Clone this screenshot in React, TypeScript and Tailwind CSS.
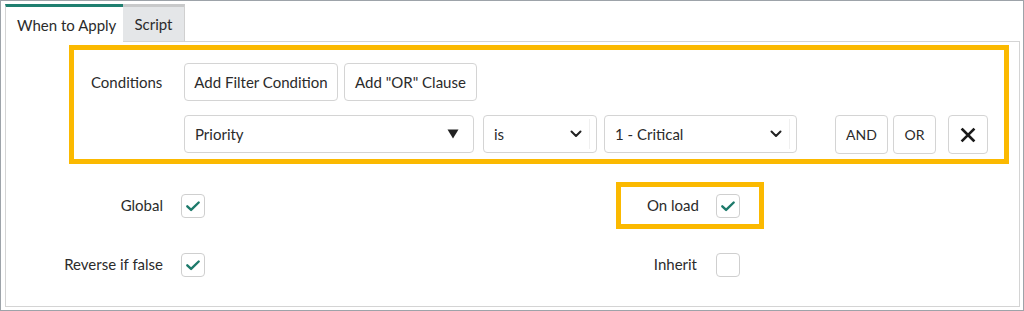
import React from "react";

const font = { fontFamily: "Lato, 'Liberation Sans', sans-serif" };

function Check({ checked }: { checked: boolean }) {
  return (
    <div className="w-[24px] h-[24px] rounded-[4px] border border-[#cfcfcf] bg-white flex items-center justify-center">
      {checked && (
        <svg width="16" height="16" viewBox="0 0 16 16" fill="none">
          <path d="M2.3 8.3 L6.1 11.9 L13.7 4.5" stroke="#1d7a6b" strokeWidth="2.4" strokeLinecap="round" strokeLinejoin="round" />
        </svg>
      )}
    </div>
  );
}

function Chevron() {
  return (
    <svg width="12" height="8" viewBox="0 0 12 8" fill="none">
      <path d="M1.5 1.5 L6 6 L10.5 1.5" stroke="#222" strokeWidth="2" strokeLinecap="round" strokeLinejoin="round" />
    </svg>
  );
}

export default function App() {
  return (
    <div style={font} className="w-[1024px] h-[311px] bg-white border border-[#9da3a9] text-[#2b2b2b] text-[15px] pl-[4px] pr-[3px] pt-[3px] flex flex-col">
      {/* tabs */}
      <div className="flex h-[38px] relative z-10">
        <div className="w-[118px] h-[38px] bg-white border-t-[3px] border-t-[#1f7f70] border-l border-l-[#d4d4d4] flex items-center pl-[11px] pt-[1px]">
          When to Apply
        </div>
        <div className="w-[62px] h-[38px] bg-[#e4e6e8] border-t-[3px] border-t-[#c8c9ca] border-r border-r-[#d0d0d0] border-b border-b-[#d4d4d4] flex items-center justify-center pt-[1px]">
          Script
        </div>
      </div>
      {/* panel */}
      <div className="-mt-px w-[1015px] h-[266px] border border-[#d4d4d4] flex flex-col pt-[3px]">
        {/* conditions box */}
        <div className="ml-[63px] w-[940px] h-[119px] border-[5px] border-[#fbb900] flex pt-[13px]">
          <div className="w-[110px] pl-[17px] pt-[8px] shrink-0">Conditions</div>
          <div className="flex flex-col gap-[14px]">
            <div className="flex gap-[6px]">
              <button className="h-[38px] w-[154px] rounded-[4px] border border-[#d4d4d4] bg-white">Add Filter Condition</button>
              <button className="h-[38px] w-[133px] rounded-[4px] border border-[#d4d4d4] bg-white">Add "OR" Clause</button>
            </div>
            <div className="flex">
              <div className="h-[38px] w-[290px] rounded-[4px] border border-[#d4d4d4] flex items-center justify-between pl-[10px] pr-[14px]">
                <span>Priority</span>
                <svg width="12" height="10" viewBox="0 0 12 10"><path d="M0.5 0.5 H11.5 L6 9.5 Z" fill="#222" /></svg>
              </div>
              <div className="ml-[9px] h-[38px] w-[114px] rounded-[4px] border border-[#d4d4d4] flex items-center pl-[10px] pr-[6px]">
                <span className="flex-1">is</span>
                <Chevron />
                <div className="ml-[7px] w-px h-[30px] bg-[#f0f0f0]" />
              </div>
              <div className="ml-[7px] h-[38px] w-[193px] rounded-[4px] border border-[#d4d4d4] flex items-center pl-[10px] pr-[6px]">
                <span className="flex-1">1 - Critical</span>
                <Chevron />
                <div className="ml-[7px] w-px h-[30px] bg-[#f0f0f0]" />
              </div>
              <button className="ml-[38px] h-[39px] w-[53px] rounded-[4px] border border-[#d4d4d4] bg-white text-[14px]">AND</button>
              <button className="ml-[5px] h-[39px] w-[43px] rounded-[4px] border border-[#d4d4d4] bg-white text-[14px]">OR</button>
              <button className="ml-[12px] h-[39px] w-[40px] rounded-[4px] border border-[#d4d4d4] bg-white flex items-center justify-center">
                <svg width="16" height="16" viewBox="0 0 16 16"><path d="M2.5 2.5 L13.5 13.5 M13.5 2.5 L2.5 13.5" stroke="#1a1a1a" strokeWidth="2.6" strokeLinecap="square" /></svg>
              </button>
            </div>
          </div>
        </div>
        {/* checkbox rows */}
        <div className="mt-[18px] flex flex-col gap-[12px]">
          <div className="flex items-center h-[47px]">
            <div className="w-[157px] text-right">Global</div>
            <div className="ml-[18px] mt-[1px]"><Check checked /></div>
            <div className="ml-[411px] h-[47px] w-[148px] border-[5px] border-[#fbb900] flex items-center pl-[26px]">
              <div className="w-[50px] text-right whitespace-nowrap">On load</div>
              <div className="ml-[19px] mt-[1px]"><Check checked /></div>
            </div>
          </div>
          <div className="flex items-center h-[47px]">
            <div className="w-[157px] text-right">Reverse if false</div>
            <div className="ml-[18px] mt-[1px]"><Check checked /></div>
            <div className="ml-[411px] h-[47px] w-[148px] border-[5px] border-transparent flex items-center pl-[26px]">
              <div className="w-[50px] text-right whitespace-nowrap">Inherit</div>
              <div className="ml-[19px] mt-[1px]"><Check checked={false} /></div>
            </div>
          </div>
        </div>
      </div>
    </div>
  );
}
